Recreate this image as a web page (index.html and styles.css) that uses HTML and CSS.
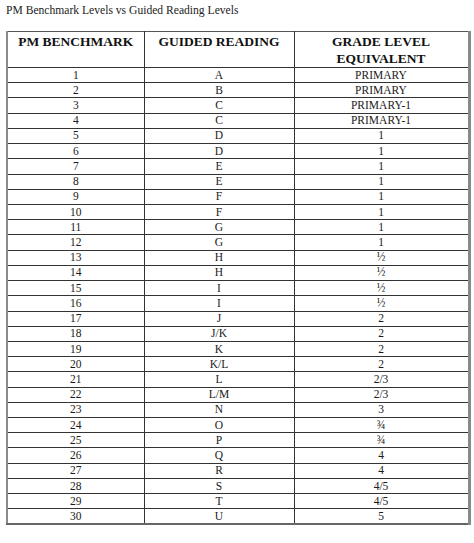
FILE: index.html
```html
<!DOCTYPE html>
<html>
<head>
<meta charset="utf-8">
<link rel="stylesheet" href="styles.css">
</head>
<body>
<div class="page">
<p class="title">PM Benchmark Levels vs Guided Reading Levels</p>
<table class="levels">
<colgroup><col class="c1"><col class="c2"><col class="c3"></colgroup>
<thead>
<tr><th>PM BENCHMARK</th><th>GUIDED READING</th><th>GRADE LEVEL<br>EQUIVALENT</th></tr>
</thead>
<tbody>
<tr><td>1</td><td>A</td><td>PRIMARY</td></tr>
<tr><td>2</td><td>B</td><td>PRIMARY</td></tr>
<tr><td>3</td><td>C</td><td>PRIMARY-1</td></tr>
<tr><td>4</td><td>C</td><td>PRIMARY-1</td></tr>
<tr><td>5</td><td>D</td><td>1</td></tr>
<tr><td>6</td><td>D</td><td>1</td></tr>
<tr><td>7</td><td>E</td><td>1</td></tr>
<tr><td>8</td><td>E</td><td>1</td></tr>
<tr><td>9</td><td>F</td><td>1</td></tr>
<tr><td>10</td><td>F</td><td>1</td></tr>
<tr><td>11</td><td>G</td><td>1</td></tr>
<tr><td>12</td><td>G</td><td>1</td></tr>
<tr><td>13</td><td>H</td><td>½</td></tr>
<tr><td>14</td><td>H</td><td>½</td></tr>
<tr><td>15</td><td>I</td><td>½</td></tr>
<tr><td>16</td><td>I</td><td>½</td></tr>
<tr><td>17</td><td>J</td><td>2</td></tr>
<tr><td>18</td><td>J/K</td><td>2</td></tr>
<tr><td>19</td><td>K</td><td>2</td></tr>
<tr><td>20</td><td>K/L</td><td>2</td></tr>
<tr><td>21</td><td>L</td><td>2/3</td></tr>
<tr><td>22</td><td>L/M</td><td>2/3</td></tr>
<tr><td>23</td><td>N</td><td>3</td></tr>
<tr><td>24</td><td>O</td><td>¾</td></tr>
<tr><td>25</td><td>P</td><td>¾</td></tr>
<tr><td>26</td><td>Q</td><td>4</td></tr>
<tr><td>27</td><td>R</td><td>4</td></tr>
<tr><td>28</td><td>S</td><td>4/5</td></tr>
<tr><td>29</td><td>T</td><td>4/5</td></tr>
<tr><td>30</td><td>U</td><td>5</td></tr>
</tbody>
</table>
</div>
</body>
</html>
```
FILE: styles.css
```css
html, body {
  margin: 0;
  padding: 0;
  background: #fff;
}
.page {
  padding: 4px 0 0 6px;
  font-family: "Liberation Serif", "Times New Roman", serif;
  color: #111;
}
.title {
  margin: 0;
  font-size: 11.6px;
  line-height: 14px;
  color: #222;
}
.levels {
  margin-top: 13px;
  width: 462px;
  table-layout: fixed;
  border-collapse: collapse;
  border-top: 1px solid #555;
  border-left: 2px solid #8a8a8a;
  border-right: 3px solid #8a8a8a;
  border-bottom: 2px solid #666;
}
.c1 { width: 137px; }
.c2 { width: 150px; }
.c3 { width: 175px; }
.levels thead tr { height: 33px; }
.levels tbody tr { height: 15.23px; }
.levels th {
  padding: 1px 0 0;
  vertical-align: top;
  font-weight: bold;
  font-size: 13.5px;
  line-height: 17px;
  color: #111;
  border: 1.5px solid #333;
  border-top: none;
}
.levels th:first-child { border-left-color: #8a8a8a; }
.levels td {
  padding: 0;
  text-align: center;
  vertical-align: middle;
  font-size: 11.5px;
  line-height: 13px;
  color: #1a1a1a;
  border: 1.5px solid #333;
}
```
